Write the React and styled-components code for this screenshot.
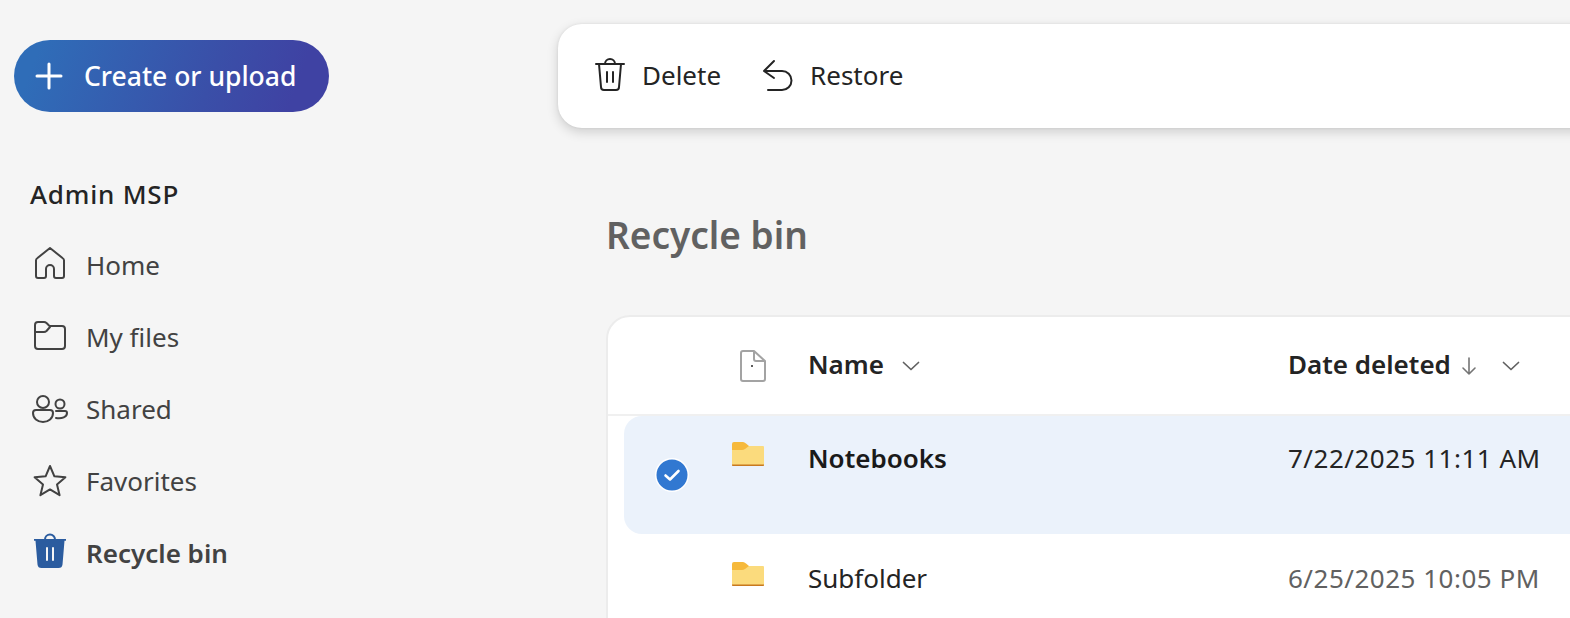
import React from "react"
import styled, { createGlobalStyle } from "styled-components"

const GlobalStyle = createGlobalStyle`
  html, body {
    margin: 0;
    height: 100%;
    overflow: hidden;
    background: #f5f5f5;
    font-family: "Noto Sans", "Open Sans", "Liberation Sans", sans-serif;
  }
`

const Page = styled.div`
  display: flex;
  width: 1570px;
  height: 618px;
  overflow: hidden;
  background: #f5f5f5;
`

const Sidebar = styled.aside`
  flex: 0 0 557px;
  box-sizing: border-box;
  padding: 40px 0 0 14px;
`

const CreateButton = styled.button`
  display: flex;
  align-items: center;
  gap: 21px;
  box-sizing: border-box;
  width: 315px;
  height: 72px;
  padding: 0 0 0 21px;
  border: 0;
  border-radius: 36px;
  background: linear-gradient(110deg, #2f6db8 8%, #3a4fa8 62%, #3f42a3 88%);
  color: #fff;
  font: 500 26.5px "Noto Sans", sans-serif;
`

const Account = styled.div`
  margin: 64px 0 0 16px;
  height: 36px;
  line-height: 36px;
  font-size: 26px;
  font-weight: 500;
  letter-spacing: 0.8px;
  color: #242424;
`

const Nav = styled.nav`
  display: flex;
  flex-direction: column;
  margin-top: 17px;
`

const NavItem = styled.a`
  display: flex;
  align-items: center;
  gap: 20px;
  height: 72px;
  padding-left: 20px;
  font-size: 26px;
  font-weight: ${p => (p.$active ? 600 : 400)};
  color: #424242;
`

const NavIcon = styled.svg`
  width: 32px;
  height: 32px;
  flex: none;
  overflow: visible;
  fill: none;
  stroke: #424242;
  stroke-width: 2;
  stroke-linejoin: round;
  stroke-linecap: round;
`

const BinIcon = styled.svg`
  width: 32px;
  height: 32px;
  flex: none;
  overflow: visible;
`

const Main = styled.main`
  flex: 1;
  min-width: 0;
  padding-top: 24px;
`

const Toolbar = styled.div`
  display: flex;
  align-items: center;
  gap: 41px;
  height: 104px;
  margin: 0 -40px 0 1px;
  padding-left: 36px;
  border-radius: 24px;
  background: #fff;
  box-shadow: 0 4px 12px rgba(0, 0, 0, 0.16), 0 0 3px rgba(0, 0, 0, 0.08);
`

const ToolButton = styled.div`
  display: flex;
  align-items: center;
  gap: 16px;
  font-size: 26px;
  color: #242424;
`

const Label = styled.span`
  margin-bottom: 3px;
`

const ToolIcon = styled.svg`
  width: 32px;
  height: 36px;
  fill: none;
  stroke: #242424;
  stroke-width: 2;
  stroke-linecap: round;
  stroke-linejoin: round;
`

const Heading = styled.h1`
  margin: 84px 0 0 49px;
  height: 46px;
  line-height: 46px;
  font-size: 37px;
  font-weight: 600;
  color: #616161;
`

const Card = styled.section`
  box-sizing: border-box;
  height: 340px;
  margin: 57px -40px 0 49px;
  border: 2px solid #ececec;
  border-radius: 24px 0 0 0;
  background: #fff;
`

const HeaderRow = styled.div`
  display: grid;
  grid-template-columns: 200px 480px 1fr;
  align-items: center;
  height: 97px;
  border-bottom: 2px solid #f0f0f0;
  font-size: 26px;
  font-weight: 600;
  color: #242424;
`

const TypeCell = styled.div`
  display: flex;
  justify-content: flex-end;
  padding-right: 42px;
`

const HeaderCell = styled.div`
  display: flex;
  align-items: center;
  gap: ${p => p.$gap}px;
`

const SortArrow = styled.svg`
  margin-right: 15px;
`

const Row = styled.div`
  display: grid;
  grid-template-columns: ${p => (p.$selected ? "48px 136px" : "48px 152px")} 480px 1fr;
  height: ${p => (p.$selected ? 118 : 84)}px;
  margin-left: ${p => (p.$selected ? 16 : 0)}px;
  border-radius: 18px 0 0 18px;
  background: ${p => (p.$selected ? "#ebf2fb" : "transparent")};
  font-size: 26px;
  font-weight: ${p => (p.$selected ? 600 : 400)};
  color: ${p => (p.$selected ? "#1a1a1a" : "#242424")};
`

const CheckCell = styled.div`
  display: flex;
  align-items: center;
  justify-content: center;
  padding-left: 48px;
`

const Check = styled.svg`
  width: 36px;
  height: 36px;
  flex: none;
`

const FolderCell = styled.div`
  display: flex;
  justify-content: flex-end;
  padding: ${p => p.$top}px 44px 0 0;
`

const NameCell = styled.div`
  line-height: 36px;
  margin-top: ${p => p.$top}px;
`

const DateCell = styled.div`
  line-height: 36px;
  margin-top: ${p => p.$top}px;
  font-weight: 400;
  letter-spacing: 0.5px;
  color: ${p => (p.$muted ? "#616161" : "#242424")};
`

const Chevron = () => (
  <svg width="18" height="10" viewBox="0 0 18 10" fill="none" stroke="#616161" strokeWidth="1.7" strokeLinecap="round" strokeLinejoin="round">
    <path d="M1.5 1.5 9 8.5l7.5-7" />
  </svg>
)

const Folder = () => (
  <svg width="32" height="24" viewBox="0 0 32 24">
    <path d="M0 2a2 2 0 0 1 2-2h9c1 0 2 .5 3 1.500L17 4v6H0z" fill="#f6b93b" />
    <path d="M0 8h10c1 0 2-.3 3-1l4-3h14a1 1 0 0 1 1 1v18H0z" fill="#fbdb7d" />
    <path d="M0 22.500h32v.8a.7.7 0 0 1-.7.7H.7a.7.7 0 0 1-.7-.7z" fill="#c8791f" />
  </svg>
)

const navItems = [
  {
    label: "Home",
    icon: <path d="M16-1 3.500 9a3 3 0 0 0-1.500 3v15a2 2 0 0 0 2 2h6a2 2 0 0 0 2-2v-7a4 4 0 0 1 8 0v7a2 2 0 0 0 2 2h6a2 2 0 0 0 2-2V12a3 3 0 0 0-1.500-3z" />,
  },
  {
    label: "My files",
    icon: <path d="M1 4a3 3 0 0 1 3-3h6c1 0 1.800.4 2.500 1l3 3h12.500a3 3 0 0 1 3 3v17a3 3 0 0 1-3 3H4a3 3 0 0 1-3-3zM1 11h9c1 0 1.800-.4 2.500-1L16 6" />,
  },
  {
    label: "Shared",
    icon: (
      <>
        <circle cx="9" cy="9" r="6" />
        <circle cx="26" cy="11" r="4.500" />
        <path d="M-1 20c0-1.600 1.200-3 3-3h14c1.800 0 3 1.400 3 3 0 5.500-4.500 9-10 9s-10-3.500-10-9zM22 18h9a2 2 0 0 1 2 2c0 4-5 6-11 5" />
      </>
    ),
  },
  {
    label: "Favorites",
    icon: <path d="M16 1l4.400 10.300 11 .9-8.400 7.200 2.600 10.800L16 24.400 6.400 30.200 9 19.400.6 12.200l11-.9z" />,
  },
]

export default function App() {
  return (
    <Page>
      <GlobalStyle />
      <Sidebar>
        <CreateButton>
          <svg width="28" height="28" viewBox="0 0 28 28" fill="none" stroke="#fff" strokeWidth="3" strokeLinecap="round">
            <path d="M14 2v24M2 14h24" />
          </svg>
          Create or upload
        </CreateButton>
        <Account>Admin MSP</Account>
        <Nav>
          {navItems.map(item => (
            <NavItem key={item.label}>
              <NavIcon viewBox="0 0 32 32">{item.icon}</NavIcon>
              {item.label}
            </NavItem>
          ))}
          <NavItem $active>
            <BinIcon viewBox="0 0 32 32">
              <path d="M11 2.500a5 5 0 0 1 10 0" fill="none" stroke="#2b5c9f" strokeWidth="2" />
              <path d="M0 2h32v1.800h-1.500l-2 23.700a4 4 0 0 1-4 3.500h-17a4 4 0 0 1-4-3.500l-2-23.700H0z" fill="#2b5c9f" />
              <path d="M13 11v12M19 11v12" stroke="#f5f5f5" strokeWidth="2" strokeLinecap="round" />
            </BinIcon>
            Recycle bin
          </NavItem>
        </Nav>
      </Sidebar>
      <Main>
        <Toolbar>
          <ToolButton>
            <ToolIcon viewBox="0 0 32 36">
              <path d="M2 6h28M11 6a5 5 0 0 1 10 0M5 6l2 23a3 3 0 0 0 3 3h12a3 3 0 0 0 3-3l2-23M13 14v10M19 14v10" />
            </ToolIcon>
            <Label>Delete</Label>
          </ToolButton>
          <ToolButton>
            <ToolIcon viewBox="0 0 32 36">
              <path d="M12 3 2 13l10 7M2 13h18a9.500 9.500 0 0 1 0 19H6" />
            </ToolIcon>
            <Label>Restore</Label>
          </ToolButton>
        </Toolbar>
        <Heading>Recycle bin</Heading>
        <Card>
          <HeaderRow>
            <TypeCell>
              <svg width="26" height="32" viewBox="0 0 26 32" fill="none" stroke="#a3a3a3" strokeWidth="2" strokeLinejoin="round">
                <path d="M3 1h11l11 10v18a2 2 0 0 1-2 2H3a2 2 0 0 1-2-2V3a2 2 0 0 1 2-2zM14 1v8a2 2 0 0 0 2 2h9" />
                <circle cx="12" cy="16" r="1" fill="#242424" stroke="none" />
              </svg>
            </TypeCell>
            <HeaderCell $gap={18}>
              <Label>Name</Label>
              <Chevron />
            </HeaderCell>
            <HeaderCell $gap={10}>
              <Label>Date deleted</Label>
              <SortArrow width="16" height="20" viewBox="0 0 16 20" fill="none" stroke="#757575" strokeWidth="1.600" strokeLinecap="round" strokeLinejoin="round">
                <path d="M8 2v16M2 12l6 6 6-6" />
              </SortArrow>
              <Chevron />
            </HeaderCell>
          </HeaderRow>
          <Row $selected>
            <CheckCell>
              <Check viewBox="0 0 36 36">
                <circle cx="18" cy="18" r="17" fill="#fff" />
                <circle cx="18" cy="18" r="15.500" fill="#3178d1" />
                <path d="M11.500 18.500l4.500 4 8.500-8.500" fill="none" stroke="#fff" strokeWidth="2.600" strokeLinecap="round" strokeLinejoin="round" />
              </Check>
            </CheckCell>
            <FolderCell $top={26}>
              <Folder />
            </FolderCell>
            <NameCell $top={24}>Notebooks</NameCell>
            <DateCell $top={24}>7/22/2025 11:11 AM</DateCell>
          </Row>
          <Row>
            <div />
            <FolderCell $top={28}>
              <Folder />
            </FolderCell>
            <NameCell $top={26}>Subfolder</NameCell>
            <DateCell $top={26} $muted>6/25/2025 10:05 PM</DateCell>
          </Row>
        </Card>
      </Main>
    </Page>
  )
}
